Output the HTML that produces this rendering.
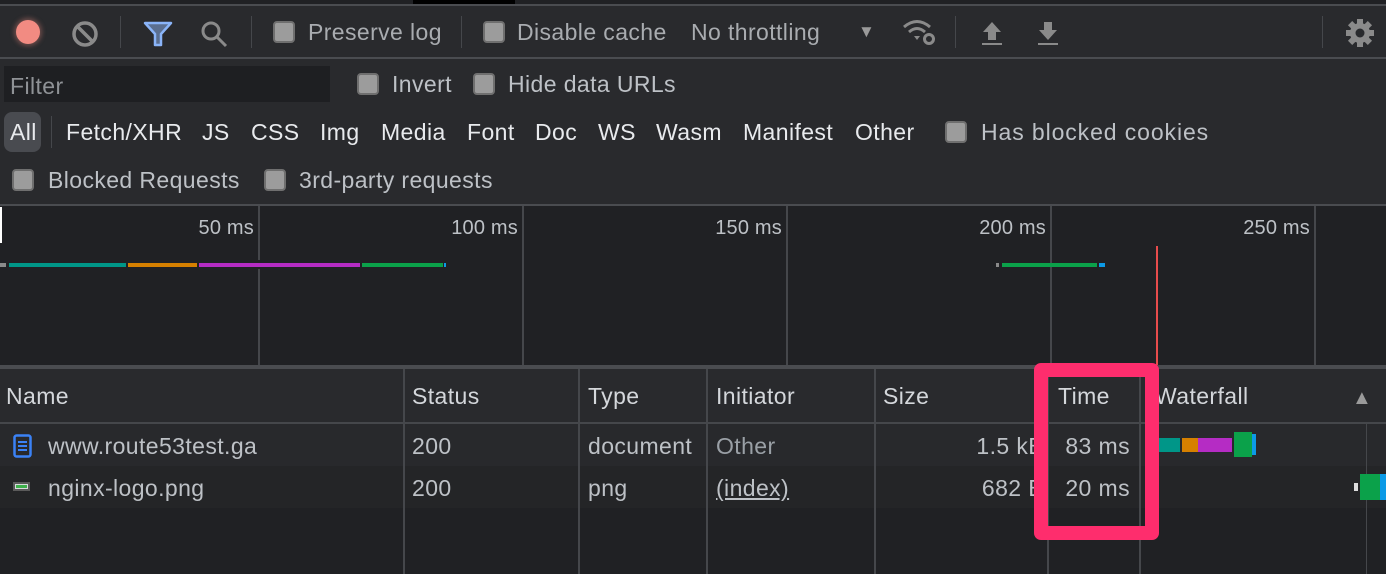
<!DOCTYPE html>
<html><head><meta charset="utf-8"><style>
*{margin:0;padding:0;box-sizing:border-box}
body{width:1386px;height:574px;overflow:hidden;background:#202124;font-family:"Liberation Sans",sans-serif;font-size:23px;letter-spacing:0.4px;color:#bdc1c6;position:relative}
.a{position:absolute}
.t{position:absolute;white-space:nowrap;line-height:26px}
.cb{position:absolute;width:22px;height:22px;border-radius:4px;background:#9c9c9c;border:2px solid #6f6f6f}
.vl{position:absolute;width:2px;background:#45474b}
.hl{position:absolute;height:2px;left:0;width:1386px;background:#45474b}
.tm{font-size:20px;letter-spacing:0.2px}
</style></head><body>
<div class="a" style="left:0;top:0;width:1386px;height:5px;background:#202124"></div>
<div class="a" style="left:413px;top:0;width:102px;height:4px;background:#000"></div>
<div class="hl" style="top:4px;background:#4a4c50"></div>
<div class="a" style="left:0;top:6px;width:1386px;height:198px;background:#292a2d"></div>
<div class="hl" style="top:57px;background:#4a4c50"></div>
<div class="a" style="left:16px;top:20px;width:24px;height:24px;border-radius:50%;background:#f28b82;box-shadow:0 0 5px 2px rgba(242,139,130,.35)"></div>
<svg class="a" style="left:71px;top:20px" width="28" height="28" viewBox="0 0 28 28"><circle cx="14" cy="14" r="11" fill="none" stroke="#8a8a8a" stroke-width="3.5"/><line x1="6.5" y1="6.5" x2="21.5" y2="21.5" stroke="#8a8a8a" stroke-width="3.5"/></svg>
<div class="vl" style="left:120px;top:16px;height:32px;width:1px"></div>
<svg class="a" style="left:143px;top:21px" width="30" height="26" viewBox="0 0 30 26"><path d="M2 2H28L18 13V24H12V13Z" fill="#5b6f90" stroke="#8ab4f8" stroke-width="2.5" stroke-linejoin="round"/></svg>
<svg class="a" style="left:199px;top:19px" width="30" height="30" viewBox="0 0 30 30"><circle cx="12" cy="12" r="8" fill="none" stroke="#8a8a8a" stroke-width="3"/><line x1="18" y1="18" x2="27" y2="27" stroke="#8a8a8a" stroke-width="3"/></svg>
<div class="vl" style="left:251px;top:16px;height:32px;width:1px"></div>
<div class="cb" style="left:273px;top:21px"></div>
<div class="t" style="left:308px;top:19px;color:#a9acb0">Preserve log</div>
<div class="vl" style="left:461px;top:16px;height:32px;width:1px"></div>
<div class="cb" style="left:483px;top:21px"></div>
<div class="t" style="left:517px;top:19px;color:#a9acb0">Disable cache</div>
<div class="t" style="left:691px;top:19px;color:#a9acb0">No throttling</div>
<div class="t" style="left:858px;top:19px;color:#9a9a9a;font-size:17px">▼</div>
<svg class="a" style="left:900px;top:17px" width="38" height="30" viewBox="0 0 38 30"><path d="M4 10Q17 -1 30 10" fill="none" stroke="#8a8a8a" stroke-width="3"/><path d="M9 15Q17 8 25 15" fill="none" stroke="#8a8a8a" stroke-width="3"/><path d="M14 19L17 23L20 19Z" fill="#8a8a8a"/><circle cx="29" cy="22" r="4.5" fill="none" stroke="#8a8a8a" stroke-width="3"/></svg>
<div class="vl" style="left:955px;top:16px;height:32px;width:1px"></div>
<svg class="a" style="left:980px;top:20px" width="24" height="26" viewBox="0 0 24 26"><path d="M12 2L21 12H16V20H8V12H3Z" fill="#8a8a8a"/><rect x="2" y="23" width="20" height="2" fill="#8a8a8a"/></svg>
<svg class="a" style="left:1036px;top:20px" width="24" height="26" viewBox="0 0 24 26"><path d="M12 20L21 10H16V2H8V10H3Z" fill="#8a8a8a"/><rect x="2" y="23" width="20" height="2" fill="#8a8a8a"/></svg>
<div class="vl" style="left:1322px;top:16px;height:32px;width:1px"></div>
<svg class="a" style="left:1344px;top:17px" width="32" height="32" viewBox="0 0 32 32"><g fill="#8a8a8a"><circle cx="16" cy="16" r="10"/><rect x="13" y="2" width="6" height="28"/><rect x="2" y="13" width="28" height="6"/><rect x="13" y="2" width="6" height="28" transform="rotate(45 16 16)"/><rect x="13" y="2" width="6" height="28" transform="rotate(-45 16 16)"/></g><circle cx="16" cy="16" r="4.5" fill="#292a2d"/></svg>
<div class="a" style="left:4px;top:66px;width:326px;height:36px;background:#1e1f22"></div>
<div class="t" style="left:10px;top:73px;color:#8f9296">Filter</div>
<div class="cb" style="left:357px;top:73px"></div>
<div class="t" style="left:392px;top:71px;color:#bdc1c6">Invert</div>
<div class="cb" style="left:473px;top:73px"></div>
<div class="t" style="left:508px;top:71px;color:#bdc1c6">Hide data URLs</div>
<div class="a" style="left:4px;top:112px;width:37px;height:40px;border-radius:8px;background:#494b50"></div>
<div class="t" style="left:10px;top:119px;color:#e8eaed">All</div>
<div class="vl" style="left:51px;top:116px;height:32px;width:1px"></div>
<div class="t" style="left:66px;top:119px;color:#e8eaed">Fetch/XHR</div>
<div class="t" style="left:202px;top:119px;color:#e8eaed">JS</div>
<div class="t" style="left:251px;top:119px;color:#e8eaed">CSS</div>
<div class="t" style="left:320px;top:119px;color:#e8eaed">Img</div>
<div class="t" style="left:381px;top:119px;color:#e8eaed">Media</div>
<div class="t" style="left:467px;top:119px;color:#e8eaed">Font</div>
<div class="t" style="left:535px;top:119px;color:#e8eaed">Doc</div>
<div class="t" style="left:598px;top:119px;color:#e8eaed">WS</div>
<div class="t" style="left:656px;top:119px;color:#e8eaed">Wasm</div>
<div class="t" style="left:743px;top:119px;color:#e8eaed">Manifest</div>
<div class="t" style="left:855px;top:119px;color:#e8eaed">Other</div>
<div class="cb" style="left:945px;top:121px"></div>
<div class="t" style="left:981px;top:119px;color:#bdc1c6;letter-spacing:0.9px">Has blocked cookies</div>
<div class="cb" style="left:12px;top:169px"></div>
<div class="t" style="left:48px;top:167px;color:#bdc1c6">Blocked Requests</div>
<div class="cb" style="left:264px;top:169px"></div>
<div class="t" style="left:299px;top:167px;color:#bdc1c6">3rd-party requests</div>
<div class="hl" style="top:204px;background:#4a4c50"></div>
<div class="a" style="left:0;top:206px;width:1386px;height:160px;background:#202124"></div>
<div class="a" style="left:0;top:207px;width:2px;height:36px;background:#fff"></div>
<div class="vl" style="left:258px;top:206px;height:160px"></div>
<div class="vl" style="left:522px;top:206px;height:160px"></div>
<div class="vl" style="left:786px;top:206px;height:160px"></div>
<div class="vl" style="left:1050px;top:206px;height:160px"></div>
<div class="vl" style="left:1314px;top:206px;height:160px"></div>
<div class="t tm" style="left:150px;top:215px;width:104px;text-align:right">50 ms</div>
<div class="t tm" style="left:414px;top:215px;width:104px;text-align:right">100 ms</div>
<div class="t tm" style="left:678px;top:215px;width:104px;text-align:right">150 ms</div>
<div class="t tm" style="left:942px;top:215px;width:104px;text-align:right">200 ms</div>
<div class="t tm" style="left:1206px;top:215px;width:104px;text-align:right">250 ms</div>
<div class="a" style="left:0;top:260px;width:450px;height:9px;background:#202124"></div>
<div class="a" style="left:0;top:263px;width:6px;height:4px;background:#8a8a8a"></div>
<div class="a" style="left:9px;top:263px;width:117px;height:4px;background:#009688"></div>
<div class="a" style="left:128px;top:263px;width:69px;height:4px;background:#d68000"></div>
<div class="a" style="left:199px;top:263px;width:161px;height:4px;background:#b52cc4"></div>
<div class="a" style="left:362px;top:263px;width:81px;height:4px;background:#0ba14a"></div>
<div class="a" style="left:444px;top:263px;width:2px;height:4px;background:#0c9ae6"></div>
<div class="a" style="left:996px;top:263px;width:3px;height:4px;background:#8a8a8a"></div>
<div class="a" style="left:1002px;top:263px;width:95px;height:4px;background:#0ba14a"></div>
<div class="a" style="left:1099px;top:263px;width:6px;height:4px;background:#0c9ae6"></div>
<div class="a" style="left:1156px;top:246px;width:2px;height:120px;background:#e74c4c"></div>
<div class="a" style="left:0;top:365px;width:1386px;height:4px;background:#4a4c50"></div>
<div class="a" style="left:0;top:369px;width:1386px;height:53px;background:#292a2d"></div>
<div class="a" style="left:0;top:422px;width:1386px;height:2px;background:#45474b"></div>
<div class="a" style="left:0;top:424px;width:1386px;height:42px;background:#28292c"></div>
<div class="a" style="left:0;top:466px;width:1386px;height:42px;background:#242527"></div>
<div class="vl" style="left:403px;top:369px;height:205px"></div>
<div class="vl" style="left:578px;top:369px;height:205px"></div>
<div class="vl" style="left:706px;top:369px;height:205px"></div>
<div class="vl" style="left:874px;top:369px;height:205px"></div>
<div class="vl" style="left:1047px;top:369px;height:205px"></div>
<div class="vl" style="left:1139px;top:369px;height:205px"></div>
<div class="vl" style="left:1366px;top:424px;height:150px;width:1px"></div>
<div class="t" style="left:6px;top:383px;color:#d4d7db">Name</div>
<div class="t" style="left:412px;top:383px;color:#d4d7db">Status</div>
<div class="t" style="left:588px;top:383px;color:#d4d7db">Type</div>
<div class="t" style="left:716px;top:383px;color:#d4d7db">Initiator</div>
<div class="t" style="left:883px;top:383px;color:#d4d7db">Size</div>
<div class="t" style="left:1058px;top:383px;color:#d4d7db">Time</div>
<div class="t" style="left:1155px;top:383px;color:#d4d7db">Waterfall</div>
<div class="t" style="left:1352px;top:385px;color:#9a9a9a;font-size:20px">▲</div>
<svg class="a" style="left:13px;top:434px" width="20" height="24" viewBox="0 0 20 24"><rect x="1.5" y="1.5" width="16" height="21" rx="2" fill="none" stroke="#3b82f6" stroke-width="2.5"/><rect x="5" y="7" width="9" height="2" fill="#3b82f6"/><rect x="5" y="11" width="9" height="2" fill="#3b82f6"/><rect x="5" y="15" width="9" height="2" fill="#3b82f6"/></svg>
<div class="t" style="left:48px;top:433px">www.route53test.ga</div>
<div class="t" style="left:412px;top:433px">200</div>
<div class="t" style="left:588px;top:433px">document</div>
<div class="t" style="left:716px;top:433px;color:#9aa0a6">Other</div>
<div class="t" style="left:940px;top:433px;width:104px;text-align:right;overflow:hidden">1.5 kB</div>
<div class="t" style="left:1050px;top:433px;width:80px;text-align:right">83 ms</div>
<div class="a" style="left:13px;top:482px;width:17px;height:9px;background:#d8dadc;border:2px solid #5a5a5a"></div>
<div class="a" style="left:16px;top:485px;width:11px;height:3px;background:#3db04b"></div>
<div class="t" style="left:48px;top:475px">nginx-logo.png</div>
<div class="t" style="left:412px;top:475px">200</div>
<div class="t" style="left:588px;top:475px">png</div>
<div class="t" style="left:716px;top:475px;text-decoration:underline">(index)</div>
<div class="t" style="left:940px;top:475px;width:104px;text-align:right;overflow:hidden">682 B</div>
<div class="t" style="left:1050px;top:475px;width:80px;text-align:right">20 ms</div>
<div class="a" style="left:1159px;top:438px;width:21px;height:14px;background:#009688"></div>
<div class="a" style="left:1182px;top:438px;width:16px;height:14px;background:#d68000"></div>
<div class="a" style="left:1198px;top:438px;width:34px;height:14px;background:#b52cc4"></div>
<div class="a" style="left:1234px;top:432px;width:18px;height:25px;background:#0ba14a"></div>
<div class="a" style="left:1252px;top:434px;width:4px;height:21px;background:#0c9ae6"></div>
<div class="a" style="left:1354px;top:483px;width:4px;height:8px;background:#ddd"></div>
<div class="a" style="left:1360px;top:474px;width:20px;height:26px;background:#0ba14a"></div>
<div class="a" style="left:1380px;top:474px;width:6px;height:26px;background:#0c9ae6"></div>
<div class="a" style="left:1034px;top:363px;width:125px;height:177px;border:14px solid #fe2d6d;border-radius:7px"></div>
</body></html>
